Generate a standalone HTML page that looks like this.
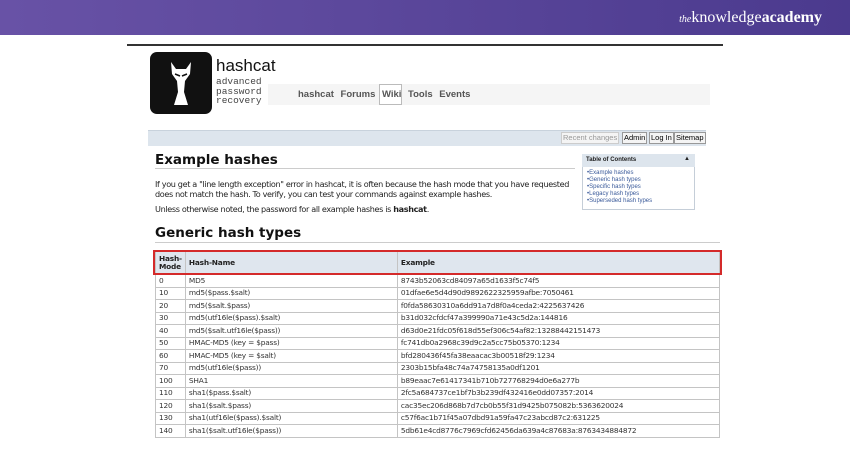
<!DOCTYPE html>
<html><head><meta charset="utf-8"><style>
*{margin:0;padding:0;box-sizing:border-box}
body{width:850px;height:450px;overflow:hidden;background:#fff;font-family:"Liberation Sans",sans-serif;position:relative}
.a{position:absolute}
.top{left:0;top:0;width:850px;height:35px;background:linear-gradient(90deg,#6852a6,#4b3a8e)}
.brand{right:28px;top:9px;color:#fff;font-family:"Liberation Serif",serif;font-size:16px}
.brand i{font-size:10px}
.btn{top:132px;height:12px;border:1px solid #999;background:#f4f4f4;font-size:7.5px;line-height:10px;padding:0 1px;color:#000}
.p{font-size:8.1px;color:#222;font-family:"DejaVu Sans",sans-serif;letter-spacing:-.35px}
table{position:absolute;left:155px;top:251px;width:565px;border-collapse:collapse;font-family:"DejaVu Sans",sans-serif;font-size:7.4px;color:#333;letter-spacing:-.2px}
td,th{border:1px solid #c4c4c4;padding:0 3px;text-align:left;white-space:nowrap}
td{height:12.5px;line-height:10px}
th{background:#dfe6ee;height:23px;font-weight:bold;color:#222;line-height:8px}
</style></head><body>
<div class="a top"></div>
<div class="a brand"><i>the</i>knowledge<b style="font-weight:bold">academy</b></div>
<div class="a" style="left:127px;top:44px;width:596px;height:2px;background:#333"></div>
<svg class="a" style="left:150px;top:52px" width="62" height="62" viewBox="0 0 62 62"><rect width="62" height="62" rx="7" fill="#111"/><path d="M21 10 L26 17 L36 17 L41 10 L40 22 L35 29 L34 40 L38 53 L24 53 L28 40 L27 29 L22 22 Z" fill="#fff"/><path d="M25 22 l5 2 M37 22 l-5 2" stroke="#111" stroke-width="1.5"/></svg>
<div class="a" style="left:216px;top:56px;font-size:17px;color:#111">hashcat</div>
<div class="a" style="left:216px;top:77px;font-family:'Liberation Mono',monospace;font-size:9.5px;line-height:9.5px;color:#444">advanced<br>password<br>recovery</div>
<div class="a" style="left:268px;top:84px;width:442px;height:21px;background:#f5f5f5"></div>
<div class="a" style="left:298px;top:89px;font-size:9.5px;font-weight:bold;color:#555;word-spacing:4px">hashcat Forums</div>
<div class="a" style="left:379px;top:84px;width:23px;height:21px;border:1px solid #bbb;background:#fff;font-size:9.5px;font-weight:bold;color:#555;padding:4px 0 0 2px">Wiki</div>
<div class="a" style="left:408px;top:89px;font-size:9.5px;font-weight:bold;color:#555;word-spacing:4px">Tools Events</div>
<div class="a" style="left:148px;top:130px;width:558px;height:16px;background:#dde5ed;border-top:1px solid #c8d2dc"></div>
<div class="a btn" style="left:561px;color:#999;border-color:#ccc">Recent changes</div>
<div class="a btn" style="left:622px">Admin</div>
<div class="a btn" style="left:649px">Log In</div>
<div class="a btn" style="left:674px">Sitemap</div>
<div class="a" style="left:155px;top:152px;font-size:13.5px;font-weight:bold;color:#111;font-family:'DejaVu Sans',sans-serif">Example hashes</div>
<div class="a" style="left:155px;top:168px;width:420px;height:1px;background:#ccc"></div>
<div class="a" style="left:582px;top:154px;width:113px;height:56px;border:1px solid #c5ced8;background:#fff"></div>
<div class="a" style="left:582px;top:154px;width:113px;height:13px;background:#dde5ed;font-size:6px;font-weight:bold;padding:3px 0 0 4px;color:#222">Table of Contents<span style="position:absolute;right:5px;top:2px">▲</span></div>
<div class="a" style="left:587px;top:170px;font-size:6px;line-height:7px;color:#3a5a9a">•Example hashes<br>•Generic hash types<br>•Specific hash types<br>•Legacy hash types<br>•Superseded hash types</div>
<div class="a p" style="left:155px;top:179px;line-height:10px">If you get a "line length exception" error in hashcat, it is often because the hash mode that you have requested<br>does not match the hash. To verify, you can test your commands against example hashes.</div>
<div class="a p" style="left:155px;top:204px">Unless otherwise noted, the password for all example hashes is <b>hashcat</b>.</div>
<div class="a" style="left:155px;top:225px;font-size:13.5px;font-weight:bold;color:#111;font-family:'DejaVu Sans',sans-serif">Generic hash types</div>
<div class="a" style="left:155px;top:242px;width:565px;height:1px;background:#ccc"></div>
<table>
<colgroup><col style="width:28px"><col style="width:212px"><col></colgroup>
<tr><th>Hash-<br>Mode</th><th>Hash-Name</th><th>Example</th></tr>
<tr><td>0</td><td>MD5</td><td>8743b52063cd84097a65d1633f5c74f5</td></tr>
<tr><td>10</td><td>md5($pass.$salt)</td><td>01dfae6e5d4d90d9892622325959afbe:7050461</td></tr>
<tr><td>20</td><td>md5($salt.$pass)</td><td>f0fda58630310a6dd91a7d8f0a4ceda2:4225637426</td></tr>
<tr><td>30</td><td>md5(utf16le($pass).$salt)</td><td>b31d032cfdcf47a399990a71e43c5d2a:144816</td></tr>
<tr><td>40</td><td>md5($salt.utf16le($pass))</td><td>d63d0e21fdc05f618d55ef306c54af82:13288442151473</td></tr>
<tr><td>50</td><td>HMAC-MD5 (key = $pass)</td><td>fc741db0a2968c39d9c2a5cc75b05370:1234</td></tr>
<tr><td>60</td><td>HMAC-MD5 (key = $salt)</td><td>bfd280436f45fa38eaacac3b00518f29:1234</td></tr>
<tr><td>70</td><td>md5(utf16le($pass))</td><td>2303b15bfa48c74a74758135a0df1201</td></tr>
<tr><td>100</td><td>SHA1</td><td>b89eaac7e61417341b710b727768294d0e6a277b</td></tr>
<tr><td>110</td><td>sha1($pass.$salt)</td><td>2fc5a684737ce1bf7b3b239df432416e0dd07357:2014</td></tr>
<tr><td>120</td><td>sha1($salt.$pass)</td><td>cac35ec206d868b7d7cb0b55f31d9425b075082b:5363620024</td></tr>
<tr><td>130</td><td>sha1(utf16le($pass).$salt)</td><td>c57f6ac1b71f45a07dbd91a59fa47c23abcd87c2:631225</td></tr>
<tr><td>140</td><td>sha1($salt.utf16le($pass))</td><td>5db61e4cd8776c7969cfd62456da639a4c87683a:8763434884872</td></tr>
</table>
<div class="a" style="left:153px;top:250px;width:569px;height:25px;border:2px solid #d42a2a"></div>
</body></html>
